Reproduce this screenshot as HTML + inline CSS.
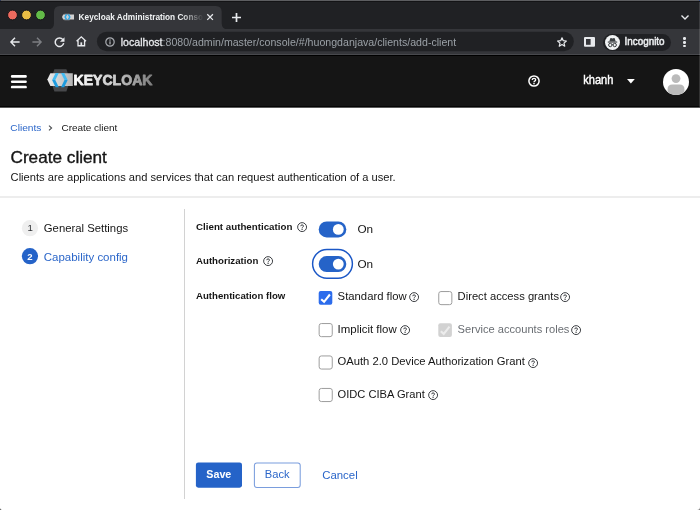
<!DOCTYPE html>
<html><head><meta charset="utf-8"><title>Keycloak Administration Console</title>
<style>
*{margin:0;padding:0;box-sizing:border-box}
html,body{width:700px;height:510px;overflow:hidden;background:#fff;font-family:"Liberation Sans",sans-serif;}
.a{position:absolute}
.t{position:absolute;white-space:nowrap;line-height:1;transform-origin:0 0}
svg{position:absolute;overflow:visible}
</style></head><body>
<div class="a" style="left:0;top:0;width:700px;height:510px;background:#fff;overflow:hidden">
<!-- ===== Chrome tab strip ===== -->
<div class="a" style="left:0;top:0;width:700px;height:29px;background:#202124"></div>
<div class="a" style="left:0;top:0;width:700px;height:1px;background:#5d5e61"></div>
<div class="a" style="left:0;top:1px;width:700px;height:1px;background:#141416"></div>
<svg style="left:0;top:4px" width="50" height="22" viewBox="0 0 50 22"><g stroke="#131316" stroke-width="1"><circle cx="12.5" cy="11" r="4.9" fill="#ed6a5e"/><circle cx="26.5" cy="11" r="4.9" fill="#e9bd45"/><circle cx="40.5" cy="11" r="4.9" fill="#63bb48"/></g></svg>
<!-- active tab -->
<svg style="left:48px;top:5.7px" width="180" height="24" viewBox="0 0 180 24"><path d="M0 23.3 Q6 23.3 6 17.3 L6 6 Q6 0 12 0 L167.7 0 Q173.7 0 173.7 6 L173.7 17.3 Q173.7 23.3 179.7 23.3 Z" fill="#35363a"/></svg>
<!-- favicon -->
<svg style="left:61px;top:12.3px" width="14" height="10" viewBox="0 0 14 10">
 <path d="M3.6 1.2 L8.4 1.2 L10.3 5 L8.4 8.8 L3.6 8.8 L1.7 5 Z" fill="#6d7075" opacity="0.6"/>
 <path d="M2.2 2.6 L13 2.6 L13 7.4 L2.2 7.4 L1 5 Z" fill="#d0d0d0"/>
 <path d="M5.6 2.4 L4.1 5 L5.6 7.6" fill="none" stroke="#2aa7e8" stroke-width="1.5"/>
 <path d="M7.3 2.4 L8.8 5 L7.3 7.6" fill="none" stroke="#2aa7e8" stroke-width="1.5"/>
</svg>
<!-- tab close -->
<svg style="left:206.7px;top:14.2px" width="6.2" height="6.2" viewBox="0 0 7 7"><path d="M0.3 0.3 L6.7 6.7 M6.7 0.3 L0.3 6.7" stroke="#e8eaed" stroke-width="1.4" fill="none"/></svg>
<!-- new tab plus -->
<svg style="left:232px;top:12.8px" width="9" height="9" viewBox="0 0 9 9"><path d="M4.5 0 V9 M0 4.5 H9" stroke="#e8eaed" stroke-width="1.7" fill="none"/></svg>
<!-- tab search chevron -->
<svg style="left:680.7px;top:15.3px" width="8" height="5" viewBox="0 0 8 5"><path d="M0.5 0.6 L4 4 L7.5 0.6" stroke="#e8eaed" stroke-width="1.4" fill="none"/></svg>

<!-- ===== toolbar ===== -->
<div class="a" style="left:0;top:29px;width:700px;height:25px;background:#35363a"></div>
<div class="a" style="left:0;top:54px;width:700px;height:1px;background:#48494d"></div>
<div class="a" style="left:0;top:55px;width:700px;height:1px;background:#000"></div>
<!-- back -->
<svg style="left:10px;top:37px" width="10" height="10" viewBox="0 0 10 10"><path d="M9.6 5 H1.2 M5 0.8 L0.9 5 L5 9.2" stroke="#e8eaed" stroke-width="1.4" fill="none"/></svg>
<!-- forward -->
<svg style="left:32px;top:37px" width="10" height="10" viewBox="0 0 10 10"><path d="M0.4 5 H8.8 M5 0.8 L9.1 5 L5 9.2" stroke="#7d7f83" stroke-width="1.4" fill="none"/></svg>
<!-- reload -->
<svg style="left:54px;top:36.5px" width="11" height="11" viewBox="0 0 11 11"><path d="M8.9 2.6 A4.3 4.3 0 1 0 9.7 6.2" stroke="#e8eaed" stroke-width="1.5" fill="none"/><path d="M10.5 0.2 V4.8 H5.9 Z" fill="#e8eaed"/></svg>
<!-- home -->
<svg style="left:76.2px;top:36.3px" width="10.6" height="10.6" viewBox="0 0 11 11"><path d="M0.6 5.4 L5.5 0.9 L10.4 5.4 M2.1 4.6 V10.1 H8.9 V4.6" stroke="#e8eaed" stroke-width="1.4" fill="none"/><rect x="4.6" y="6.6" width="1.8" height="3.2" fill="#e8eaed"/></svg>
<!-- omnibox -->
<svg style="left:90px;top:28px" width="490" height="28" viewBox="0 0 490 28"><rect x="6.9" y="3.7" width="476.9" height="19.5" rx="9.75" fill="#202124"/></svg>
<!-- info icon -->
<svg style="left:104.7px;top:36.7px" width="10" height="10" viewBox="0 0 10 10"><circle cx="5" cy="5" r="4.2" stroke="#a9acb1" stroke-width="1.2" fill="none"/><rect x="4.35" y="4.3" width="1.3" height="3.1" fill="#a9acb1"/><rect x="4.35" y="2.4" width="1.3" height="1.3" fill="#a9acb1"/></svg>
<!-- star -->
<svg style="left:556.9px;top:37.1px" width="10" height="10" viewBox="0 0 11 11"><path d="M5.5 0.9 L6.9 4.1 L10.3 4.4 L7.7 6.7 L8.5 10.1 L5.5 8.3 L2.5 10.1 L3.3 6.7 L0.7 4.4 L4.1 4.1 Z" stroke="#e8eaed" stroke-width="1.35" fill="none" stroke-linejoin="round"/></svg>
<!-- side panel -->
<svg style="left:584.4px;top:36.9px" width="11" height="10" viewBox="0 0 11 10"><rect x="0" y="0" width="11" height="9.8" rx="1" fill="#e8eaed"/><rect x="2" y="2" width="4.6" height="5.8" fill="#35363a"/></svg>
<!-- incognito pill -->
<div class="a" style="left:603px;top:33.6px;width:68.2px;height:17px;border-radius:8.5px;background:#202124"></div>
<svg style="left:604.5px;top:34.6px" width="15" height="15" viewBox="0 0 15 15"><circle cx="7.5" cy="7.5" r="7.5" fill="#f1f3f4"/>
 <path d="M4.3 6.5 L5.2 3.5 Q5.4 2.9 6 3.1 L7.5 3.6 L9 3.1 Q9.6 2.9 9.8 3.5 L10.7 6.5 Z" fill="#3c4043"/>
 <rect x="2.8" y="6.5" width="9.4" height="1.1" fill="#3c4043"/>
 <circle cx="5.3" cy="10" r="1.7" stroke="#3c4043" stroke-width="1" fill="none"/><circle cx="9.7" cy="10" r="1.7" stroke="#3c4043" stroke-width="1" fill="none"/><path d="M6.8 9.7 Q7.5 9.2 8.2 9.7" stroke="#3c4043" stroke-width="0.9" fill="none"/>
</svg>
<!-- menu dots -->
<div class="a" style="left:683px;top:37.2px;width:2.7px;height:2.7px;border-radius:50%;background:#e8eaed"></div>
<div class="a" style="left:683px;top:41px;width:2.7px;height:2.7px;border-radius:50%;background:#e8eaed"></div>
<div class="a" style="left:683px;top:44.8px;width:2.7px;height:2.7px;border-radius:50%;background:#e8eaed"></div>

<!-- ===== Keycloak masthead ===== -->
<div class="a" style="left:0;top:56px;width:700px;height:51px;background:#151515"></div>
<div class="a" style="left:0;top:106px;width:700px;height:1px;background:#050505"></div>
<div class="a" style="left:0;top:107px;width:700px;height:1px;background:#5a5a5a"></div>
<div class="a" style="left:699px;top:2px;width:1px;height:105px;background:rgba(255,255,255,0.13)"></div>
<!-- hamburger -->
<svg style="left:4px;top:66px" width="40" height="30" viewBox="0 0 40 30"><rect x="6.9" y="9.1" width="15.9" height="2.65" rx="1.2" fill="#fff"/><rect x="6.9" y="14.4" width="15.9" height="2.65" rx="1.2" fill="#fff"/><rect x="6.9" y="19.7" width="15.9" height="2.65" rx="1.2" fill="#fff"/></svg>
<!-- logo -->
<div class="a" style="left:46px;top:68px;width:112px;height:25px;transform:translateZ(0);will-change:transform">
<svg style="left:0;top:0" width="112" height="25" viewBox="0 0 112 25">
 <defs>
  <linearGradient id="bg" x1="0" x2="1" y1="0" y2="0"><stop offset="0" stop-color="#ececec"/><stop offset="1" stop-color="#b4b4b4"/></linearGradient>
  <linearGradient id="kg" gradientUnits="userSpaceOnUse" x1="27" x2="107" y1="0" y2="0"><stop offset="0" stop-color="#ffffff"/><stop offset="0.5" stop-color="#cdcdcd"/><stop offset="1" stop-color="#7c7c7c"/></linearGradient>
 </defs>
 <path d="M8.4 1.2 L20.4 1.2 L24.2 12.3 L20.4 23.4 L8.4 23.4 L4.6 12.3 Z" fill="#47484b"/>
 <path d="M4.4 5.2 L26.8 5.2 L26.8 17.9 L4.4 17.9 L1.3 11.6 Z" fill="url(#bg)"/>
 <path d="M6.1 12.1 L9.6 5 L12.8 5 L9.3 12.1 Z" fill="#45bdf3"/>
 <path d="M6.1 12.1 L9.6 19.3 L12.8 19.3 L9.3 12.1 Z" fill="#1e9ce0"/>
 <path d="M21.7 12.1 L18.2 5 L15 5 L18.5 12.1 Z" fill="#45bdf3"/>
 <path d="M21.7 12.1 L18.2 19.3 L15 19.3 L18.5 12.1 Z" fill="#1e9ce0"/>
 <text x="27.5" y="17.3" font-family="Liberation Sans, sans-serif" font-weight="bold" font-size="14.8" textLength="79" lengthAdjust="spacingAndGlyphs" fill="url(#kg)" stroke="url(#kg)" stroke-width="0.8" stroke-linejoin="round">KEYCLOAK</text>
</svg></div>
<!-- help -->
<svg style="left:528.2px;top:75.2px" width="12" height="12" viewBox="0 0 12 12"><circle cx="6" cy="6" r="5.1" stroke="#fff" stroke-width="1.5" fill="none"/><path d="M4.3 4.9 Q4.3 3.3 6 3.3 Q7.7 3.3 7.7 4.8 Q7.7 5.7 6.6 6.2 Q6 6.5 6 7.2" stroke="#fff" stroke-width="1.3" fill="none"/><rect x="5.3" y="7.9" width="1.4" height="1.4" fill="#fff"/></svg>
<!-- caret -->
<svg style="left:626.5px;top:79.4px" width="8" height="5" viewBox="0 0 8 5"><path d="M0 0 H7.8 L3.9 4.4 Z" fill="#fff"/></svg>
<!-- avatar -->
<svg style="left:663px;top:68.8px" width="26" height="26" viewBox="0 0 26 26"><defs><clipPath id="av"><circle cx="13" cy="13" r="13"/></clipPath></defs><circle cx="13" cy="13" r="13" fill="#fff"/><g clip-path="url(#av)"><circle cx="13" cy="9.6" r="4.4" fill="#bababa"/><path d="M4.6 26 V20.2 Q4.6 15.6 9.4 15.6 H16.6 Q21.4 15.6 21.4 20.2 V26 Z" fill="#bababa"/></g></svg>

<!-- ===== page ===== -->
<svg style="left:48.1px;top:125px" width="5" height="6" viewBox="0 0 5 6"><path d="M1 0.6 L3.6 3 L1 5.4" stroke="#4a4d50" stroke-width="1.1" fill="none"/></svg>
<div class="a" style="left:0;top:196px;width:700px;height:2px;background:#ededed"></div>
<div class="a" style="left:184px;top:208.5px;width:1px;height:290px;background:#d2d2d2"></div>
<!-- step circles -->
<svg style="left:20px;top:218px" width="20" height="50" viewBox="0 0 20 50"><circle cx="9.95" cy="10.15" r="8.1" fill="#efefef"/><circle cx="9.95" cy="38.15" r="8.1" fill="#2563c8"/></svg>
<!-- toggles -->
<svg style="left:310px;top:215px" width="46" height="70" viewBox="0 0 46 70">
 <rect x="8.7" y="6.4" width="27.6" height="16" rx="8" fill="#2563c8"/><circle cx="28.3" cy="14.4" r="5.4" fill="#fff"/>
 <rect x="2.6" y="34.5" width="39.8" height="28.7" rx="14.35" fill="#fff" stroke="#1b57c6" stroke-width="1.45"/>
 <rect x="8.7" y="41.1" width="27.6" height="16" rx="8" fill="#2563c8"/><circle cx="28.3" cy="49.1" r="5.4" fill="#fff"/>
</svg>
<!-- checkboxes -->
<svg style="left:0;top:0" width="700" height="510" viewBox="0 0 700 510">
<rect x="318.7" y="291.1" width="13.6" height="13.7" rx="2" fill="#2c6cec"/><path d="M321.2 299.2 L324.1 301.8 L329.9 294.5" stroke="#fff" stroke-width="2.1" fill="none"/>
<rect x="438.75" y="291.55" width="13.1" height="13.1" rx="2.2" fill="#fff" stroke="#9d9d9d" stroke-width="1.0"/>
<rect x="319.15000000000003" y="323.55" width="13.1" height="13.1" rx="2.2" fill="#fff" stroke="#9d9d9d" stroke-width="1.0"/>
<rect x="438.3" y="323.2" width="13.6" height="13.7" rx="2" fill="#d2d2d2"/><path d="M440.8 331.3 L443.7 333.9 L449.5 326.6" stroke="#ececec" stroke-width="2.1" fill="none"/>
<rect x="319.15000000000003" y="355.95" width="13.1" height="13.1" rx="2.2" fill="#fff" stroke="#9d9d9d" stroke-width="1.0"/>
<rect x="319.15000000000003" y="388.45" width="13.1" height="13.1" rx="2.2" fill="#fff" stroke="#9d9d9d" stroke-width="1.0"/>
</svg>
<!-- help icons (small) -->
<svg width="0" height="0"><defs><g id="hq"><circle cx="5.1" cy="5.1" r="4.45" stroke="#383b3f" stroke-width="1.0" fill="none"/><path d="M3.75 4.2 Q3.75 2.9 5.1 2.9 Q6.45 2.9 6.45 4.1 Q6.45 4.8 5.7 5.2 Q5.1 5.5 5.1 6.1" stroke="#383b3f" stroke-width="1.0" fill="none"/><rect x="4.5" y="6.7" width="1.2" height="1.2" fill="#383b3f"/></g></defs></svg>
<svg style="left:297.4px;top:222.0px" width="10.2" height="10.2"><use href="#hq"/></svg>
<svg style="left:263.2px;top:256.4px" width="10.2" height="10.2"><use href="#hq"/></svg>
<svg style="left:408.8px;top:292.4px" width="10.2" height="10.2"><use href="#hq"/></svg>
<svg style="left:560.1px;top:292.4px" width="10.2" height="10.2"><use href="#hq"/></svg>
<svg style="left:399.6px;top:325.4px" width="10.2" height="10.2"><use href="#hq"/></svg>
<svg style="left:570.8px;top:325.4px" width="10.2" height="10.2"><use href="#hq"/></svg>
<svg style="left:528.1px;top:357.7px" width="10.2" height="10.2"><use href="#hq"/></svg>
<svg style="left:427.6px;top:390.3px" width="10.2" height="10.2"><use href="#hq"/></svg>
<!-- buttons -->
<svg style="left:190px;top:456px" width="120" height="40" viewBox="0 0 120 40">
 <rect x="5.9" y="6.45" width="46.1" height="25.2" rx="2.4" fill="#2563c8"/>
 <rect x="64.4" y="6.9" width="45.8" height="24.5" rx="2.4" fill="#fff" stroke="#7a9ddd" stroke-width="1.05"/>
</svg>
<div class="a" style="left:0;top:0;width:1px;height:1px;background:#2b3654"></div><div class="a" style="left:699px;top:0;width:1px;height:1px;background:#3b5187"></div>
<!-- window bottom corners -->
<svg style="left:0;top:508px" width="2" height="2" viewBox="0 0 2 2"><path d="M0 0 Q0 2 2 2 H0 Z" fill="#2e2e2e"/></svg>
<svg style="left:697px;top:507px" width="3" height="3" viewBox="0 0 3 3"><path d="M3 0 Q3 3 0 3 H3 Z" fill="#7d7d7d"/></svg>
<div class="t" style="left:78px;top:12px;font-size:9.2px;font-weight:bold;color:#f1f3f4;transform:translate(0.60px,0.91px) scaleX(0.8987);-webkit-mask-image:linear-gradient(90deg,#000 82%,transparent 100%);mask-image:linear-gradient(90deg,#000 82%,transparent 100%);">Keycloak Administration Conso</div>
<div class="t" style="left:120px;top:36px;font-size:11px;font-weight:normal;color:#9aa0a6;transform:translate(0.70px,0.69px) scaleX(0.9642);"><span style="color:#e8eaed;-webkit-text-stroke:0.3px #e8eaed">localhost</span>:8080/admin/master/console/#/huongdanjava/clients/add-client</div>
<div class="t" style="left:624px;top:37px;font-size:10.3px;font-weight:normal;color:#eceef0;transform:translate(0.50px,0.38px) scaleX(0.9594);-webkit-text-stroke:0.5px #eceef0;">Incognito</div>
<div class="t" style="left:583px;top:75px;font-size:11.9px;font-weight:normal;color:#ffffff;transform:translate(0.30px,0.13px) scaleX(0.9288);-webkit-text-stroke:0.4px #ffffff;">khanh</div>
<div class="t" style="left:10px;top:123px;font-size:9.8px;font-weight:normal;color:#2b66c9;transform:translate(0.30px,0.20px) scaleX(1.0383);">Clients</div>
<div class="t" style="left:61px;top:123px;font-size:9.8px;font-weight:normal;color:#151515;transform:translate(0.50px,0.20px) scaleX(1.0145);">Create client</div>
<div class="t" style="left:10px;top:149px;font-size:16.4px;font-weight:normal;color:#151515;transform:translate(0.50px,0.32px) scaleX(1.0476);-webkit-text-stroke:0.35px #151515;">Create client</div>
<div class="t" style="left:10px;top:172px;font-size:10.9px;font-weight:normal;color:#151515;transform:translate(0.60px,0.07px) scaleX(1.0227);">Clients are applications and services that can request authentication of a user.</div>
<div class="t" style="left:43px;top:223px;font-size:11.4px;font-weight:normal;color:#151515;transform:translate(0.80px,0.45px) scaleX(0.9934);">General Settings</div>
<div class="t" style="left:43px;top:251px;font-size:11.4px;font-weight:normal;color:#2b66c9;transform:translate(0.80px,0.75px) scaleX(1.0074);">Capability config</div>
<div class="t" style="left:27px;top:223px;font-size:9.7px;font-weight:normal;color:#2e3033;transform:translate(0.50px,0.39px) scaleX(0.9990);">1</div>
<div class="t" style="left:27px;top:251px;font-size:9.6px;font-weight:bold;color:#ffffff;transform:translate(0.20px,0.87px) scaleX(0.9990);">2</div>
<div class="t" style="left:196px;top:222px;font-size:9.3px;font-weight:bold;color:#151515;transform:translate(0.00px,0.53px) scaleX(1.0484);">Client authentication</div>
<div class="t" style="left:196px;top:257px;font-size:9.3px;font-weight:bold;color:#151515;transform:translate(0.00px,0.33px) scaleX(1.0400);">Authorization</div>
<div class="t" style="left:196px;top:291px;font-size:9.3px;font-weight:bold;color:#151515;transform:translate(0.00px,0.73px) scaleX(1.0354);">Authentication flow</div>
<div class="t" style="left:357px;top:224px;font-size:11.2px;font-weight:normal;color:#151515;transform:translate(0.40px,0.12px) scaleX(1.0510);">On</div>
<div class="t" style="left:357px;top:259px;font-size:11.2px;font-weight:normal;color:#151515;transform:translate(0.40px,0.12px) scaleX(1.0510);">On</div>
<div class="t" style="left:337px;top:291px;font-size:11.1px;font-weight:normal;color:#151515;transform:translate(0.60px,0.10px) scaleX(1.0185);">Standard flow</div>
<div class="t" style="left:457px;top:291px;font-size:11.1px;font-weight:normal;color:#151515;transform:translate(0.60px,0.10px) scaleX(1.0090);">Direct access grants</div>
<div class="t" style="left:337px;top:324px;font-size:11.1px;font-weight:normal;color:#151515;transform:translate(0.60px,0.10px) scaleX(1.0309);">Implicit flow</div>
<div class="t" style="left:457px;top:324px;font-size:11.1px;font-weight:normal;color:#6a6e73;transform:translate(0.60px,0.10px) scaleX(1.0017);">Service accounts roles</div>
<div class="t" style="left:337px;top:355px;font-size:11.1px;font-weight:normal;color:#151515;transform:translate(0.50px,0.70px) scaleX(1.0124);">OAuth 2.0 Device Authorization Grant</div>
<div class="t" style="left:337px;top:388px;font-size:11.1px;font-weight:normal;color:#151515;transform:translate(0.50px,0.70px) scaleX(1.0042);">OIDC CIBA Grant</div>
<div class="t" style="left:206px;top:469px;font-size:11.5px;font-weight:bold;color:#ffffff;transform:translate(0.30px,0.47px) scaleX(0.9308);">Save</div>
<div class="t" style="left:264px;top:469px;font-size:11.5px;font-weight:normal;color:#2b66c9;transform:translate(0.80px,0.47px) scaleX(0.9696);">Back</div>
<div class="t" style="left:322px;top:469px;font-size:11.6px;font-weight:normal;color:#2b66c9;transform:translate(0.20px,0.48px) scaleX(0.9835);">Cancel</div>

</div>

</body></html>
